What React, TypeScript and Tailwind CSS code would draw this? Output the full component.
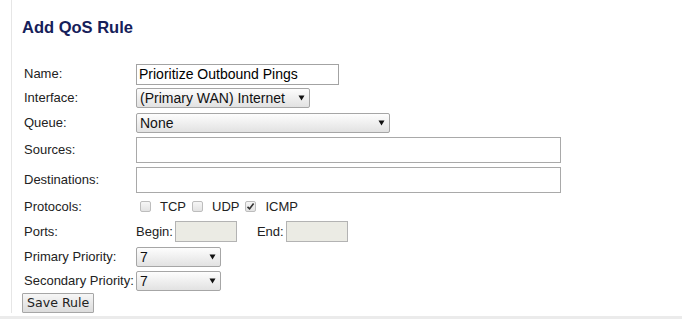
import React from "react";

const Arrow = () => (
  <svg width="7" height="6" viewBox="0 0 7 6" className="shrink-0">
    <polygon points="0.5,0.5 6.5,0.5 3.5,5.5" fill="#111" />
  </svg>
);

function Sel({ cls, text }: { cls: string; text: string }) {
  return (
    <div
      className={
        "flex items-center justify-between h-[20px] border border-[#a6a6a6] rounded-[2px] bg-gradient-to-b from-[#fdfdfd] to-[#e2e2e2] pl-[3px] pr-[4px] text-[14px] text-[#111] " +
        cls
      }
    >
      <span className="leading-none">{text}</span>
      <Arrow />
    </div>
  );
}

function Box({ checked }: { checked?: boolean }) {
  return (
    <span className="relative inline-flex w-[11px] h-[11px] rounded-[2px] border border-[#bdbdbd] bg-gradient-to-b from-[#f6f6f6] to-[#e3e3e3] shrink-0">
      {checked && (
        <svg width="9" height="9" viewBox="0 0 9 9" className="absolute left-[0px] top-[0px]">
          <path d="M1.5 4.8 L3.6 6.8 L7.6 1.6" stroke="#333" strokeWidth="1.6" fill="none" />
        </svg>
      )}
    </span>
  );
}

function Row({ h, label, children }: { h: string; label: string; children: React.ReactNode }) {
  return (
    <div className={"flex items-center " + h}>
      <div className="w-[114px] pl-[2px] shrink-0 text-[13px] text-[#222]">{label}</div>
      <div className="flex items-center">{children}</div>
    </div>
  );
}

export default function App() {
  return (
    <div
      className="w-[682px] h-[319px] bg-white overflow-hidden"
      style={{ fontFamily: '"Liberation Sans", Arial, sans-serif' }}
    >
      <div className="pl-[11px]">
        <div className="h-[313px] border-l border-[#e6e6e6] pl-[10px] pt-[17px]">
          <div className="text-[16.5px] leading-[20px] font-bold text-[#15205a]">Add QoS Rule</div>
          <div className="mt-[25px] flex flex-col">
            <Row h="h-[24px]" label="Name:">
              <div className="w-[203px] h-[21px] border border-[#a3a3a3] flex items-center pl-[2px] text-[14px] text-black">
                Prioritize Outbound Pings
              </div>
            </Row>
            <Row h="h-[24px]" label="Interface:">
              <Sel cls="w-[174px]" text="(Primary WAN) Internet" />
            </Row>
            <Row h="h-[25px]" label="Queue:">
              <Sel cls="w-[254px]" text="None" />
            </Row>
            <Row h="h-[30px]" label="Sources:">
              <div className="w-[425px] h-[26px] border border-[#a9a9a9]" />
            </Row>
            <Row h="h-[30px]" label="Destinations:">
              <div className="w-[425px] h-[26px] border border-[#a9a9a9]" />
            </Row>
            <Row h="h-[23px]" label="Protocols:">
              <div className="flex items-center pl-[4px] text-[13px] text-[#222]">
                <Box />
                <span className="ml-[9px]">TCP</span>
                <span className="ml-[6px] inline-flex">
                  <Box />
                </span>
                <span className="ml-[9px]">UDP</span>
                <span className="ml-[6px] inline-flex">
                  <Box checked />
                </span>
                <span className="ml-[9px]">ICMP</span>
              </div>
            </Row>
            <Row h="h-[27px]" label="Ports:">
              <div className="flex items-center text-[13px] text-[#222]">
                <span>Begin:</span>
                <div className="ml-[2px] w-[62px] h-[21px] border border-[#b3b3b3] bg-[#ebebe4]" />
                <span className="ml-[20px]">End:</span>
                <div className="ml-[2px] w-[62px] h-[21px] border border-[#b3b3b3] bg-[#ebebe4]" />
              </div>
            </Row>
            <Row h="h-[24px]" label="Primary Priority:">
              <Sel cls="w-[85px]" text="7" />
            </Row>
            <Row h="h-[24px]" label="Secondary Priority:">
              <Sel cls="w-[85px]" text="7" />
            </Row>
            <div className="flex">
              <button
                className="h-[20px] px-[4px] border border-[#a6a6a6] rounded-[1px] bg-gradient-to-b from-[#f6f6f6] to-[#dcdcdc] text-[12.6px] leading-none text-[#222]"
                style={{ fontFamily: '"DejaVu Sans", sans-serif' }}
              >
                Save Rule
              </button>
            </div>
          </div>
        </div>
      </div>
      <div className="mt-[3px] h-[3px] bg-[#ebebeb]" />
    </div>
  );
}
